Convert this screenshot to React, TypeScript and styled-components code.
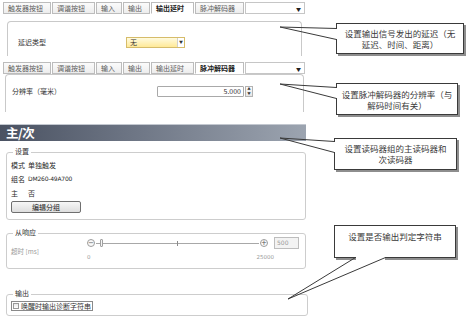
import styled, { createGlobalStyle } from "styled-components";

const GlobalStyle = createGlobalStyle`
  html, body {
    margin: 0;
    padding: 0;
    background: #fff;
  }
  body {
    font-family: "Noto Sans CJK SC", "Noto Sans", sans-serif;
    color: #333;
  }
`;

const Page = styled.div`
  position: relative;
  width: 474px;
  height: 319px;
  overflow: hidden;
  background: #fff;
`;

const Shot = styled.div`
  display: flex;
  flex-direction: column;
  width: 308px;
`;

const TabPanel = styled.div<{ $top: number }>`
  padding-top: ${(p) => p.$top}px;
`;

const TabStrip = styled.div`
  display: flex;
  height: 12px;
  margin-left: 3px;
  width: 302px;
`;

const Tab = styled.div<{ $w: number; $active?: boolean }>`
  flex: none;
  width: ${(p) => p.$w}px;
  box-sizing: border-box;
  margin-right: 1px;
  padding-left: 4px;
  font-size: 7px;
  line-height: 10px;
  white-space: nowrap;
  color: ${(p) => (p.$active ? "#1a1a1a" : "#5c5c5c")};
  font-weight: ${(p) => (p.$active ? 600 : 400)};
  background: ${(p) => (p.$active ? "#fff" : "linear-gradient(#fbfbfb, #ededed)")};
  border: 1px solid #bcbcbc;
  border-bottom-color: ${(p) => (p.$active ? "#fff" : "#bcbcbc")};
  position: relative;
  z-index: ${(p) => (p.$active ? 1 : 0)};
`;

const TabFiller = styled.div`
  flex: 1;
  display: flex;
  justify-content: flex-end;
  align-items: center;
  padding-right: 3px;
  border: 1px solid #c6c6c6;
  background: #fff;
  font-size: 5px;
  color: #222;
`;

const TabBody = styled.div<{ $gap: number; $left: number; $w: number; $h: number }>`
  margin: ${(p) => p.$gap}px 0 0 ${(p) => p.$left}px;
  width: ${(p) => p.$w}px;
  height: ${(p) => p.$h}px;
  box-sizing: border-box;
  border: 1px solid #c9c9c9;
  border-bottom: none;
  border-radius: 4px 4px 0 0;
  background: #fff;
`;

const FieldRow = styled.div<{ $top: number; $left: number }>`
  display: flex;
  align-items: center;
  padding: ${(p) => p.$top}px 0 0 ${(p) => p.$left}px;
`;

const FieldLabel = styled.div<{ $w: number }>`
  width: ${(p) => p.$w}px;
  font-size: 7px;
  line-height: 11px;
  color: #333;
`;

const Select = styled.div`
  display: flex;
  align-items: center;
  width: 59px;
  height: 11px;
  box-sizing: border-box;
  border: 1px solid #d6bc6a;
  background: linear-gradient(#fffbe0, #ffe997);
  font-size: 7px;
  line-height: 9px;
  padding-left: 3px;
`;

const SelectButton = styled.div`
  margin-left: auto;
  width: 7px;
  height: 9px;
  box-sizing: border-box;
  border-left: 1px solid #cfcfcf;
  background: #fff;
  font-size: 4px;
  line-height: 9px;
  text-align: center;
`;

const NumberBox = styled.div`
  width: 87px;
  height: 11px;
  box-sizing: border-box;
  border: 1px solid #a9a9a9;
  border-radius: 1px;
  font-size: 7px;
  line-height: 9px;
  text-align: right;
  padding-right: 2px;
  background: #fff;
`;

const Spinner = styled.div`
  display: flex;
  flex-direction: column;
  margin-left: 1px;
  width: 8px;
  height: 11px;
  box-sizing: border-box;
  border: 1px solid #b3b3b3;
  background: linear-gradient(#fafafa, #e6e6e6);
  font-size: 3.5px;
  line-height: 4.5px;
  text-align: center;
  color: #333;
`;

const Header = styled.div`
  margin-top: 12px;
  width: 306px;
  height: 17px;
  box-sizing: border-box;
  padding-left: 6px;
  background: linear-gradient(to right, #4a5262 0%, #6f7786 45%, #9ca4b0 100%);
  border-top: 1px solid #c3c8d0;
  color: #fff;
  font-size: 12.5px;
  font-weight: 700;
  line-height: 16px;
  letter-spacing: -0.5px;
`;

const Group = styled.fieldset<{ $top: number; $w: number; $bottom: number }>`
  display: flex;
  flex-direction: column;
  margin: ${(p) => p.$top}px 0 0 6px;
  width: ${(p) => p.$w}px;
  box-sizing: border-box;
  min-width: 0;
  padding: 0 4px ${(p) => p.$bottom}px 4px;
  border: 1px solid #cdcdcd;
  border-radius: 3px;
  font-size: 7px;
  line-height: 10px;
`;

const Legend = styled.legend`
  margin-left: 2px;
  padding: 0 2px 2px 2px;
  font-size: 7px;
  line-height: 10px;
  color: #333;
`;

const InfoRow = styled.div`
  display: flex;
  height: 14px;
  align-items: center;
  font-size: 7px;
  line-height: 10px;
  color: #2a2a2a;
`;

const InfoKey = styled.div`
  width: 17px;
`;

const InfoMono = styled.span`
  font-family: "DejaVu Sans", sans-serif;
  font-size: 6px;
  letter-spacing: -0.2px;
`;

const EditButton = styled.div`
  margin-top: 1px;
  width: 70px;
  height: 12px;
  box-sizing: border-box;
  border: 1px solid #6f6f6f;
  border-radius: 2px;
  background: linear-gradient(#f7f7f7, #dedede);
  font-size: 7px;
  line-height: 10px;
  text-align: center;
  color: #222;
`;

const SliderRow = styled.div`
  display: flex;
  align-items: flex-start;
  margin-top: -2px;
`;

const SliderLabel = styled.div`
  width: 76px;
  padding-top: 8px;
  font-size: 6.5px;
  line-height: 12px;
  color: #9a9a9a;
`;

const SliderColumn = styled.div`
  display: flex;
  flex-direction: column;
  width: 181px;
`;

const SliderLine = styled.div`
  display: flex;
  align-items: center;
  height: 12px;
`;

const RoundButton = styled.div`
  flex: none;
  width: 8px;
  height: 8px;
  box-sizing: border-box;
  border: 1px solid #9d9d9d;
  border-radius: 50%;
  background: #fafafa;
  font-size: 7px;
  line-height: 6px;
  text-align: center;
  color: #555;
  font-family: "DejaVu Sans", sans-serif;
`;

const Track = styled.div`
  position: relative;
  flex: 1;
  height: 1px;
  margin: 0 1px;
  background: #a8a8a8;
`;

const Thumb = styled.div`
  position: absolute;
  left: 4px;
  top: -4px;
  width: 3px;
  height: 8px;
  box-sizing: border-box;
  border: 1px solid #a0a0a0;
  border-radius: 1px;
  background: #f4f4f4;
`;

const Tick = styled.div`
  position: absolute;
  left: 81px;
  top: -2px;
  width: 1px;
  height: 5px;
  background: #8a8a8a;
`;

const Scale = styled.div`
  display: flex;
  justify-content: space-between;
  margin-top: 3px;
  margin-right: -6px;
  font-size: 5.5px;
  line-height: 10px;
  color: #9a9a9a;
  font-family: "DejaVu Sans", sans-serif;
`;

const ValueBox = styled.div`
  margin-left: 6px;
  width: 25px;
  height: 12px;
  box-sizing: border-box;
  border: 1px solid #bdbdbd;
  background: #f3f3f3;
  font-size: 6px;
  line-height: 10px;
  padding-left: 2px;
  color: #9a9a9a;
  font-family: "DejaVu Sans", sans-serif;
`;

const CheckRow = styled.div`
  display: flex;
  align-self: flex-start;
  align-items: center;
  gap: 2px;
  margin-top: 1px;
  padding: 0 1px;
  height: 10px;
  box-sizing: border-box;
  border: 1px solid #8a8a8a;
  font-size: 7px;
  line-height: 8px;
  color: #333;
`;

const CheckBox = styled.div`
  width: 6px;
  height: 6px;
  box-sizing: border-box;
  border: 1px solid #9a9a9a;
  background: linear-gradient(#eaeaea, #fff);
`;

const Callout = styled.div<{ $x: number; $y: number; $w: number; $h: number; $pt: number }>`
  position: absolute;
  left: ${(p) => p.$x}px;
  top: ${(p) => p.$y}px;
  width: ${(p) => p.$w}px;
  height: ${(p) => p.$h}px;
  box-sizing: border-box;
  padding-top: ${(p) => p.$pt}px;
  border: 1px solid #3a3a3a;
  background: #fff;
  box-shadow: 2px 2px 0 #8e8e8e;
  font-size: 8.5px;
  line-height: 11px;
  text-align: center;
  color: #3a3a3a;
`;

const PointerLayer = styled.svg`
  position: absolute;
  left: 0;
  top: 0;
  width: 474px;
  height: 319px;
  pointer-events: none;
`;

const tabs = [
  { label: "触发器按钮", w: 48 },
  { label: "调谐按钮", w: 43 },
  { label: "输入", w: 26 },
  { label: "输出", w: 27 },
  { label: "输出延时", w: 43 },
  { label: "脉冲解码器", w: 49 },
];

const Tabs = ({ active }: { active: string }) => (
  <TabStrip>
    {tabs.map((t) => (
      <Tab key={t.label} $w={t.w} $active={t.label === active}>
        {t.label}
      </Tab>
    ))}
    <TabFiller>▼</TabFiller>
  </TabStrip>
);

// wedge: tip point, two base points, plus the bit of box border to hide
const pointers = [
  { tip: [280, 27], a: [336.5, 28.5], b: [336.5, 39.5], erase: [335.5, 29, 2, 10] },
  { tip: [280, 84], a: [336.5, 87.5], b: [336.5, 98.5], erase: [335.5, 88, 2, 10] },
  { tip: [280, 138], a: [334.5, 141.5], b: [334.5, 152.5], erase: [333.5, 142, 2, 10] },
  { tip: [288, 299], a: [355.5, 257.5], b: [385.5, 257.5], erase: [356, 256.5, 29, 4] },
];

export default function App() {
  return (
    <Page>
      <GlobalStyle />
      <Shot>
        <TabPanel $top={2}>
          <Tabs active="输出延时" />
          <TabBody $gap={7} $left={7} $w={295} $h={35}>
            <FieldRow $top={15} $left={10}>
              <FieldLabel $w={108}>延迟类型</FieldLabel>
              <Select>
                无<SelectButton>▼</SelectButton>
              </Select>
            </FieldRow>
          </TabBody>
        </TabPanel>

        <TabPanel $top={6}>
          <Tabs active="脉冲解码器" />
          <TabBody $gap={0} $left={5} $w={299} $h={38}>
            <FieldRow $top={11} $left={6}>
              <FieldLabel $w={145}>分辨率（毫米）</FieldLabel>
              <NumberBox>5.000</NumberBox>
              <Spinner>
                <span>▲</span>
                <span>▼</span>
              </Spinner>
            </FieldRow>
          </TabBody>
        </TabPanel>

        <Header>主/次</Header>

        <Group $top={5} $w={300} $bottom={6}>
          <Legend>设置</Legend>
          <InfoRow>
            <InfoKey>模式</InfoKey>单独触发
          </InfoRow>
          <InfoRow>
            <InfoKey>组名</InfoKey>
            <InfoMono>DM260-49A700</InfoMono>
          </InfoRow>
          <InfoRow>
            <InfoKey>主</InfoKey>否
          </InfoRow>
          <EditButton>编辑分组</EditButton>
        </Group>

        <Group $top={7} $w={300} $bottom={6}>
          <Legend>从响应</Legend>
          <SliderRow>
            <SliderLabel>超时 [ms]</SliderLabel>
            <SliderColumn>
              <SliderLine>
                <RoundButton>−</RoundButton>
                <Track>
                  <Thumb />
                  <Tick />
                </Track>
                <RoundButton>+</RoundButton>
              </SliderLine>
              <Scale>
                <span>0</span>
                <span>25000</span>
              </Scale>
            </SliderColumn>
            <ValueBox>500</ValueBox>
          </SliderRow>
        </Group>

        <Group $top={19} $w={302} $bottom={4}>
          <Legend>输出</Legend>
          <CheckRow>
            <CheckBox />
            唤醒时输出诊断字符串
          </CheckRow>
        </Group>
      </Shot>

      <Callout $x={336} $y={23} $w={128} $h={31} $pt={4}>
        设置输出信号发出的延迟（无
        <br />
        延迟、时间、距离）
      </Callout>
      <Callout $x={336} $y={83} $w={122} $h={32} $pt={5}>
        设置脉冲解码器的分辨率（与
        <br />
        解码时间有关）
      </Callout>
      <Callout $x={334} $y={138} $w={123} $h={32} $pt={4}>
        设置读码器组的主读码器和
        <br />
        次读码器
      </Callout>
      <Callout $x={334} $y={225} $w={122} $h={33} $pt={5}>
        设置是否输出判定字符串
      </Callout>

      <PointerLayer viewBox="0 0 474 319">
        {pointers.map((p, i) => (
          <g key={i}>
            <rect x={p.erase[0]} y={p.erase[1]} width={p.erase[2]} height={p.erase[3]} fill="#fff" />
            <polyline
              points={`${p.a[0]},${p.a[1]} ${p.tip[0]},${p.tip[1]} ${p.b[0]},${p.b[1]}`}
              fill="none"
              stroke="#3a3a3a"
              strokeWidth={1}
            />
          </g>
        ))}
      </PointerLayer>
    </Page>
  );
}
